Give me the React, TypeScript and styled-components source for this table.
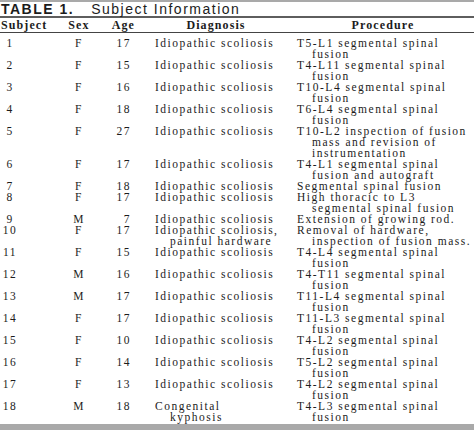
import React from "react";
import styled, { createGlobalStyle } from "styled-components";

const GlobalStyle = createGlobalStyle`
  html, body {
    margin: 0;
    padding: 0;
    background: #fff;
  }
  body {
    width: 474px;
    height: 430px;
    overflow: hidden;
  }
`;

const COLS = "62px 34px 44px 152px 1fr";

const Page = styled.div`
  width: 474px;
  height: 430px;
  display: flex;
  flex-direction: column;
  color: #1c1c1c;
  overflow: hidden;
`;

const GreyBar = styled.div<{ $h: number }>`
  height: ${(p) => p.$h}px;
  background: #a9a9a9;
  flex-shrink: 0;
`;

const Title = styled.div`
  height: 14px;
  display: flex;
  align-items: center;
  padding-left: 1px;
  font-family: "Liberation Sans", Arial, sans-serif;
  font-size: 14px;
  line-height: 14px;
  letter-spacing: 1.5px;
  border-bottom: 2px solid #5e5e5e;
`;

const TitleLabel = styled.span`
  font-weight: 700;
  margin-right: 17px;
`;

const HeaderRow = styled.div`
  display: grid;
  grid-template-columns: ${COLS};
  height: 14px;
  align-items: center;
  font-family: "Liberation Serif", "Times New Roman", serif;
  font-weight: 700;
  font-size: 12px;
  letter-spacing: 1.1px;
  border-bottom: 1px solid #444;
`;

const HeadCell = styled.div<{ $align: "left" | "center" | "right"; $pad?: number }>`
  text-align: ${(p) => p.$align};
  padding-left: ${(p) => (p.$align === "left" ? p.$pad ?? 0 : 0)}px;
  padding-right: ${(p) => (p.$align === "right" ? p.$pad ?? 0 : 0)}px;
  white-space: nowrap;
`;

const Body = styled.div`
  padding-top: 5px;
  flex: 1;
  font-family: "Liberation Serif", "Times New Roman", serif;
  font-size: 11.5px;
  line-height: 11px;
  letter-spacing: 1.5px;
`;

const Row = styled.div`
  display: grid;
  grid-template-columns: ${COLS};
`;

const NumCell = styled.div`
  width: 20px;
  text-align: center;
`;

const SexCell = styled.div`
  text-align: center;
`;

const AgeCell = styled.div`
  text-align: right;
  padding-right: 9px;
`;

const TextCell = styled.div<{ $pad: number }>`
  padding-left: ${(p) => p.$pad}px;
  white-space: nowrap;
`;

const Line = styled.div<{ $cont: boolean }>`
  padding-left: ${(p) => (p.$cont ? 15 : 0)}px;
  white-space: nowrap;
`;

type Subject = {
  id: number;
  sex: "F" | "M";
  age: number;
  diagnosis: string[];
  procedure: string[];
};

const IS = ["Idiopathic scoliosis"];
const seg = (level: string) => [`${level} segmental spinal`, "fusion"];

const subjects: Subject[] = [
  { id: 1, sex: "F", age: 17, diagnosis: IS, procedure: seg("T5-L1") },
  { id: 2, sex: "F", age: 15, diagnosis: IS, procedure: seg("T4-L11") },
  { id: 3, sex: "F", age: 16, diagnosis: IS, procedure: seg("T10-L4") },
  { id: 4, sex: "F", age: 18, diagnosis: IS, procedure: seg("T6-L4") },
  {
    id: 5,
    sex: "F",
    age: 27,
    diagnosis: IS,
    procedure: ["T10-L2 inspection of fusion", "mass and revision of", "instrumentation"],
  },
  {
    id: 6,
    sex: "F",
    age: 17,
    diagnosis: IS,
    procedure: ["T4-L1 segmental spinal", "fusion and autograft"],
  },
  { id: 7, sex: "F", age: 18, diagnosis: IS, procedure: ["Segmental spinal fusion"] },
  {
    id: 8,
    sex: "F",
    age: 17,
    diagnosis: IS,
    procedure: ["High thoracic to L3", "segmental spinal fusion"],
  },
  { id: 9, sex: "M", age: 7, diagnosis: IS, procedure: ["Extension of growing rod."] },
  {
    id: 10,
    sex: "F",
    age: 17,
    diagnosis: ["Idiopathic scoliosis,", "painful hardware"],
    procedure: ["Removal of hardware,", "inspection of fusion mass."],
  },
  { id: 11, sex: "F", age: 15, diagnosis: IS, procedure: seg("T4-L4") },
  { id: 12, sex: "M", age: 16, diagnosis: IS, procedure: seg("T4-T11") },
  { id: 13, sex: "M", age: 17, diagnosis: IS, procedure: seg("T11-L4") },
  { id: 14, sex: "F", age: 17, diagnosis: IS, procedure: seg("T11-L3") },
  { id: 15, sex: "F", age: 10, diagnosis: IS, procedure: seg("T4-L2") },
  { id: 16, sex: "F", age: 14, diagnosis: IS, procedure: seg("T5-L2") },
  { id: 17, sex: "F", age: 13, diagnosis: IS, procedure: seg("T4-L2") },
  { id: 18, sex: "M", age: 18, diagnosis: ["Congenital", "kyphosis"], procedure: seg("T4-L3") },
];

const Lines: React.FC<{ lines: string[] }> = ({ lines }) => (
  <>
    {lines.map((l, i) => (
      <Line key={i} $cont={i > 0}>
        {l}
      </Line>
    ))}
  </>
);

export default function App() {
  return (
    <>
      <GlobalStyle />
      <Page>
        <GreyBar $h={2} />
        <Title>
          <TitleLabel>TABLE 1.</TitleLabel>
          Subject Information
        </Title>
        <HeaderRow>
          <HeadCell $align="left" $pad={1}>Subject</HeadCell>
          <HeadCell $align="center">Sex</HeadCell>
          <HeadCell $align="right" $pad={5}>Age</HeadCell>
          <HeadCell $align="center">Diagnosis</HeadCell>
          <HeadCell $align="center">Procedure</HeadCell>
        </HeaderRow>
        <Body>
          {subjects.map((s) => (
            <Row key={s.id}>
              <NumCell>{s.id}</NumCell>
              <SexCell>{s.sex}</SexCell>
              <AgeCell>{s.age}</AgeCell>
              <TextCell $pad={15}>
                <Lines lines={s.diagnosis} />
              </TextCell>
              <TextCell $pad={5}>
                <Lines lines={s.procedure} />
              </TextCell>
            </Row>
          ))}
        </Body>
        <GreyBar $h={6} />
      </Page>
    </>
  );
}
